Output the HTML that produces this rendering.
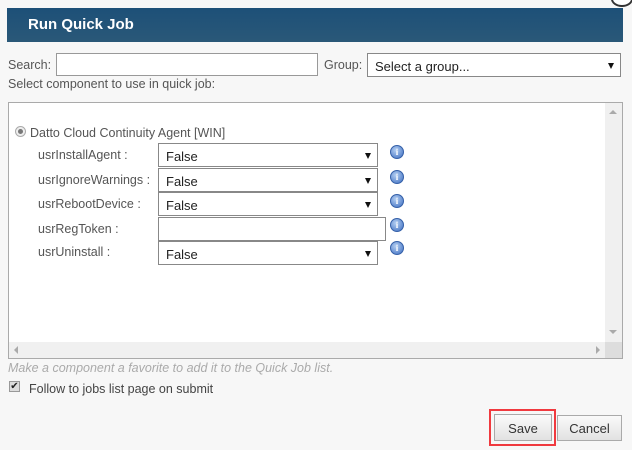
<!DOCTYPE html>
<html><head><style>
*{box-sizing:border-box;margin:0;padding:0}
body{width:632px;height:450px;background:#f7f7f7;font-family:"Liberation Sans",Arial,sans-serif;font-size:12.5px;color:#555;position:relative;overflow:hidden}
.abs{position:absolute}
.hdr{left:7px;top:8px;width:616px;height:34px;background:linear-gradient(#1d5078,#2a5878);color:#fff;font-weight:bold;font-size:15px;padding:8px 0 0 21px}
.inp{background:#fff;border:1px solid #999}
.sel{background:#fff;border:1px solid #888;color:#222;font-size:13px;padding:5px 0 0 7px}
.sel:after{content:"";position:absolute;right:6px;top:9px;border-left:3.5px solid transparent;border-right:3.5px solid transparent;border-top:6px solid #111}
.lbl{color:#555;font-size:12.5px}
.info{width:14px;height:14px;border-radius:50%;background:radial-gradient(circle at 40% 35%,#b4cff2,#3b6cc0);border:1px solid #3560a8;color:#fff;font-size:9px;font-weight:bold;text-align:center;line-height:12px;font-family:"Liberation Serif",serif}
.btn{border:1px solid #aaa;background:linear-gradient(#fafafa,#e2e2e2);color:#333;font-size:13px;text-align:center}
</style></head><body>
<div class="abs" style="left:611px;top:-9px;width:22px;height:16px;border-radius:50%;border:2px solid #333;background:#fff"></div>
<div class="abs hdr">Run Quick Job</div>
<div class="abs lbl" style="left:8px;top:58px">Search:</div>
<div class="abs inp" style="left:56px;top:53px;width:262px;height:23px"></div>
<div class="abs lbl" style="left:324px;top:58px">Group:</div>
<div class="abs sel" style="left:367px;top:53px;width:254px;height:24px">Select a group...</div>
<div class="abs lbl" style="left:8px;top:77px">Select component to use in quick job:</div>
<div class="abs" style="left:8px;top:102px;width:615px;height:257px;background:#fff;border:1px solid #aaa">
 <div class="abs" style="right:0;top:0;width:17px;height:240px;background:#f0f0f0"></div>
 <div class="abs" style="left:0;bottom:0;width:613px;height:16px;background:#f0f0f0"></div>
 <div class="abs" style="right:0;bottom:0;width:17px;height:16px;background:#ddd"></div>
 <div class="abs" style="right:5px;top:7px;border-left:4px solid transparent;border-right:4px solid transparent;border-bottom:4px solid #aaa"></div>
 <div class="abs" style="right:5px;top:227px;border-left:4px solid transparent;border-right:4px solid transparent;border-top:4px solid #aaa"></div>
 <div class="abs" style="left:5px;bottom:4px;border-top:4px solid transparent;border-bottom:4px solid transparent;border-right:4px solid #aaa"></div>
 <div class="abs" style="right:22px;bottom:4px;border-top:4px solid transparent;border-bottom:4px solid transparent;border-left:4px solid #aaa"></div>
</div>
<div class="abs" style="left:15px;top:126px;width:11px;height:11px;border-radius:50%;border:1px solid #aaa;background:#eee"><div style="margin:2px;width:5px;height:5px;border-radius:50%;background:#777"></div></div>
<div class="abs lbl" style="left:30px;top:126px">Datto Cloud Continuity Agent [WIN]</div>
<div class="abs lbl" style="left:38px;top:148px">usrInstallAgent :</div>
<div class="abs sel" style="left:158px;top:143px;width:220px;height:24px">False</div>
<div class="abs info" style="left:390px;top:145px">i</div>
<div class="abs lbl" style="left:38px;top:173px">usrIgnoreWarnings :</div>
<div class="abs sel" style="left:158px;top:168px;width:220px;height:24px">False</div>
<div class="abs info" style="left:390px;top:170px">i</div>
<div class="abs lbl" style="left:38px;top:197px">usrRebootDevice :</div>
<div class="abs sel" style="left:158px;top:192px;width:220px;height:24px">False</div>
<div class="abs info" style="left:390px;top:194px">i</div>
<div class="abs lbl" style="left:38px;top:222px">usrRegToken :</div>
<div class="abs inp" style="left:158px;top:217px;width:228px;height:24px;border-color:#888"></div>
<div class="abs info" style="left:390px;top:218px">i</div>
<div class="abs lbl" style="left:38px;top:245px">usrUninstall :</div>
<div class="abs sel" style="left:158px;top:241px;width:220px;height:24px">False</div>
<div class="abs info" style="left:390px;top:241px">i</div>
<div class="abs" style="left:8px;top:361px;color:#aaa;font-style:italic;font-size:12.5px">Make a component a favorite to add it to the Quick Job list.</div>
<div class="abs" style="left:9px;top:381px;width:11px;height:11px;border:1px solid #999;background:#ddd;font-size:10px;line-height:9px;color:#222;text-align:center">✔</div>
<div class="abs lbl" style="left:29px;top:382px;color:#444">Follow to jobs list page on submit</div>
<div class="abs" style="left:489px;top:409px;width:67px;height:37px;border:2px solid #f03a3f"></div>
<div class="abs btn" style="left:494px;top:414px;width:58px;height:27px;padding-top:6px">Save</div>
<div class="abs btn" style="left:557px;top:415px;width:65px;height:26px;padding-top:5px">Cancel</div>
</body></html>
